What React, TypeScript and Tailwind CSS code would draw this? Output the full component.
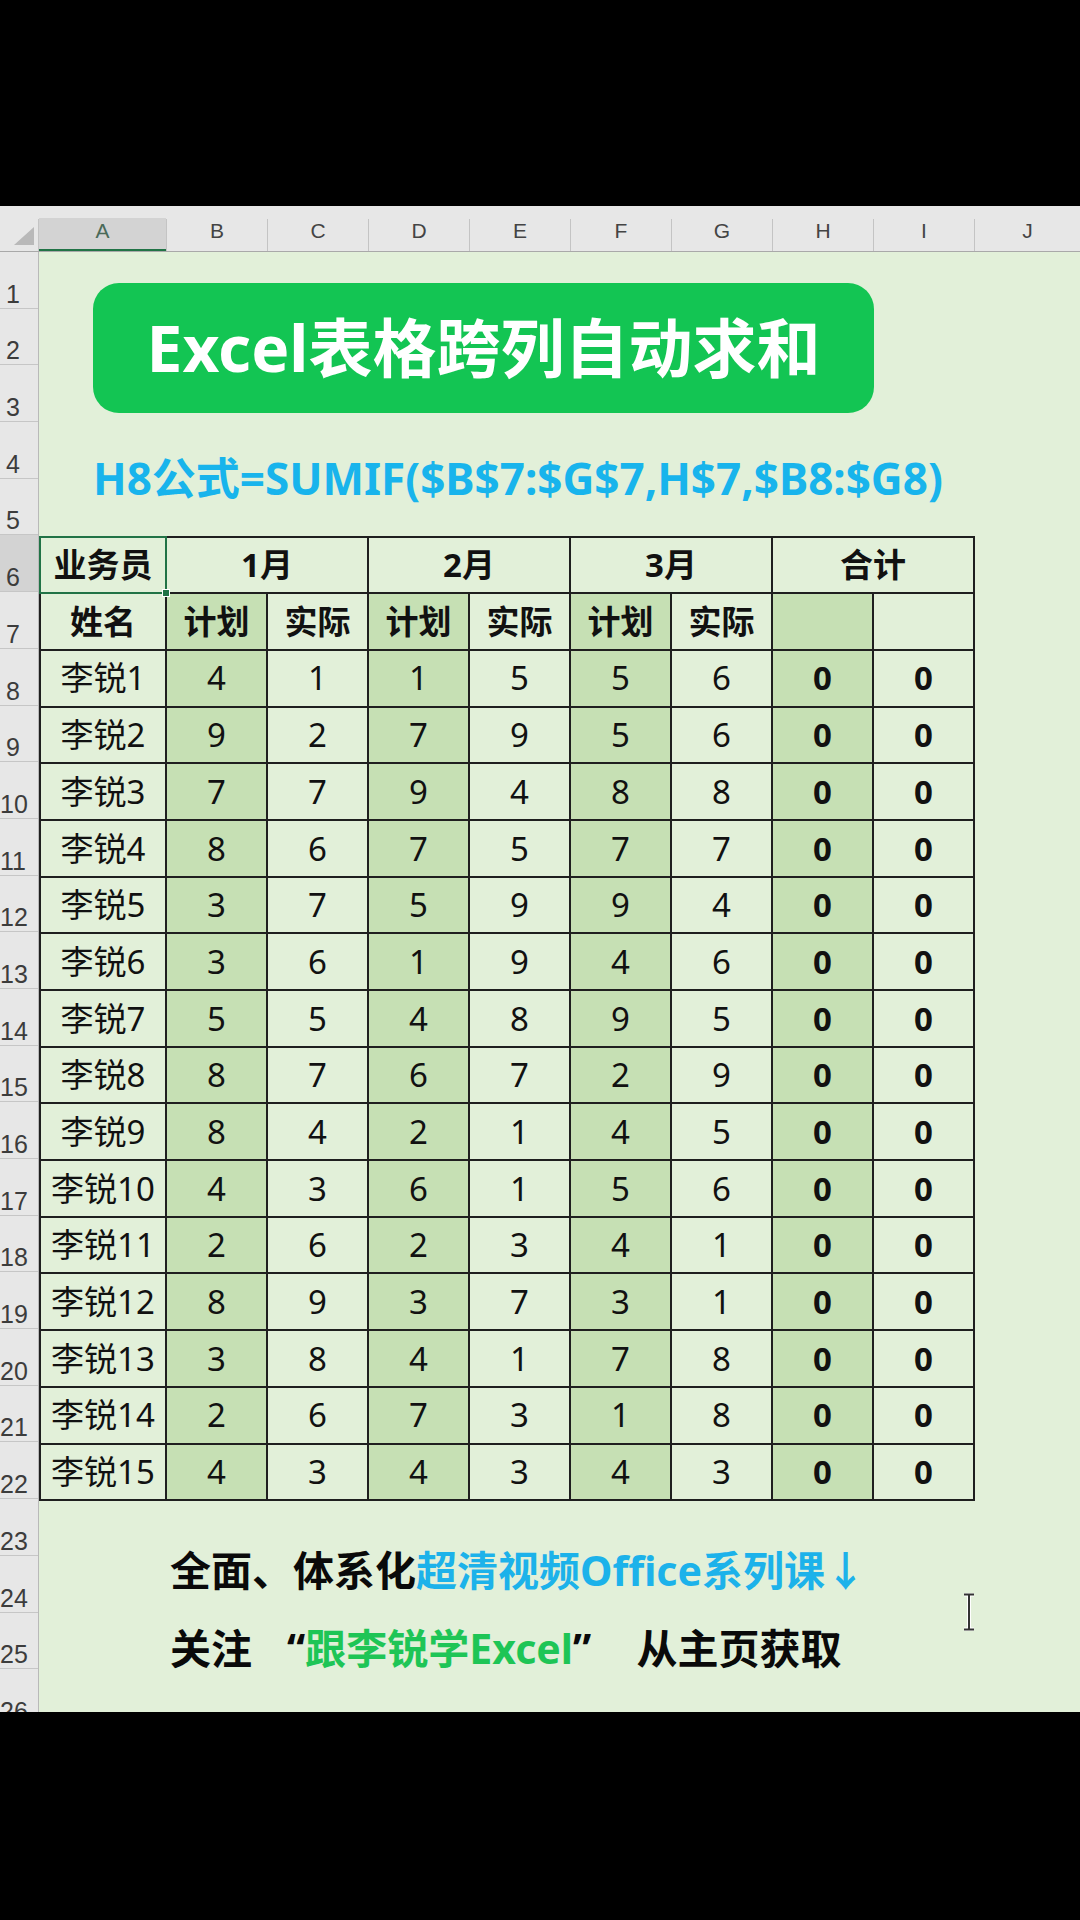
import React from 'react'

const data = [
  [4, 1, 1, 5, 5, 6],
  [9, 2, 7, 9, 5, 6],
  [7, 7, 9, 4, 8, 8],
  [8, 6, 7, 5, 7, 7],
  [3, 7, 5, 9, 9, 4],
  [3, 6, 1, 9, 4, 6],
  [5, 5, 4, 8, 9, 5],
  [8, 7, 6, 7, 2, 9],
  [8, 4, 2, 1, 4, 5],
  [4, 3, 6, 1, 5, 6],
  [2, 6, 2, 3, 4, 1],
  [8, 9, 3, 7, 3, 1],
  [3, 8, 4, 1, 7, 8],
  [2, 6, 7, 3, 1, 8],
  [4, 3, 4, 3, 4, 3],
]

const letters = ['B', 'C', 'D', 'E', 'F', 'G', 'H', 'I']

// cell styles
const cell = 'flex items-center justify-center border-r-2 border-b-2 border-[#1f1f1f] text-[#111]'
const light = 'bg-[#e2f0d9]'
const dark = 'bg-[#c6e0b4]'

const App: React.FC = () => {
  return (
    <div className="w-[1080px] h-[1920px] bg-black flex flex-col overflow-hidden font-['Noto_Sans','Noto_Sans_CJK_SC',sans-serif]">
      <div className="h-[206px] shrink-0" />

      <div className="h-[1506px] shrink-0 flex flex-col bg-[#e2f0d9]">
        {/* Column headers */}
        <div className="h-[46px] shrink-0 flex bg-[#e7e7e7] border-b border-[#a9a9a9] font-['Liberation_Sans',sans-serif] text-[21px] text-[#444]">
          <div className="w-[39px] shrink-0 flex items-end">
            <div className="flex-1 h-full flex items-end justify-end pb-[6px] pr-[4px]">
              <svg width="20" height="18" viewBox="0 0 20 18">
                <polygon points="0,18 20,0 20,18" fill="#b9b9b9" />
              </svg>
            </div>
            <div className="w-px h-[32px] bg-[#c4c4c4]" />
          </div>
          <div className="w-[128px] shrink-0 flex items-end">
            <div className="flex-1 h-[33px] bg-[#d3d3d3] border-b-2 border-[#217346] flex items-end justify-center pb-[3px] text-[#4a6a58]">
              A
            </div>
            <div className="w-px h-[32px] bg-[#c4c4c4]" />
          </div>
          {letters.map((l) => (
            <div key={l} className="w-[101px] shrink-0 flex items-end">
              <div className="flex-1 flex items-end justify-center pb-[5px]">{l}</div>
              <div className="w-px h-[32px] bg-[#c4c4c4]" />
            </div>
          ))}
          <div className="flex-1 flex items-end justify-center pb-[5px]">J</div>
        </div>

        <div className="flex-1 flex overflow-hidden">
          {/* Row headers */}
          <div className="w-[39px] shrink-0 flex flex-col bg-[#e7e7e7] border-r border-[#b9b9b9] overflow-hidden font-['Liberation_Sans',sans-serif] text-[25px] leading-[26px] text-[#3c3c3c]">
            {Array.from({ length: 26 }, (_, i) => (
              <div
                key={i}
                className={`h-[56.7px] shrink-0 flex items-end border-b border-[#c6c6c6] ${i === 5 ? 'bg-[#d3d3d3]' : ''}`}
              >
                <div className="w-[26px] text-center pb-[1px]">{i + 1}</div>
              </div>
            ))}
          </div>

          {/* Sheet content */}
          <div className="flex-1 flex flex-col relative">
            <div className="h-[170px] shrink-0 pt-[31px] pl-[54px]">
              <div className="w-[781px] h-[130px] rounded-[26px] bg-[#13c553] flex items-center justify-center text-white text-[64px] font-bold">
                Excel表格跨列自动求和
              </div>
            </div>

            <div className="h-[113.5px] shrink-0 pt-[28px] pl-[54px]">
              <div className="text-[44px] leading-[56px] font-bold text-[#18b4ec] whitespace-nowrap">
                H8公式=SUMIF($B$7:$G$7,H$7,$B8:$G8)
              </div>
            </div>

            {/* Table */}
            <div className="grid grid-cols-[126px_repeat(8,101px)] auto-rows-[56.7px] w-[936px] border-t-2 border-l-2 border-[#1f1f1f] text-[33px]">
              <div className={`${cell} ${light} relative font-bold`}>
                业务员
                <div className="absolute -left-[2px] -top-[2px] -right-[2px] -bottom-[2px] border-2 border-[#217346]" />
                <div className="absolute -right-[5px] -bottom-[5px] w-[8px] h-[8px] bg-[#217346] border border-white" />
              </div>
              <div className={`${cell} ${light} col-span-2 font-bold`}>1月</div>
              <div className={`${cell} ${light} col-span-2 font-bold`}>2月</div>
              <div className={`${cell} ${light} col-span-2 font-bold`}>3月</div>
              <div className={`${cell} ${light} col-span-2 font-bold`}>合计</div>

              <div className={`${cell} ${light} font-bold`}>姓名</div>
              <div className={`${cell} ${dark} font-bold`}>计划</div>
              <div className={`${cell} ${light} font-bold`}>实际</div>
              <div className={`${cell} ${dark} font-bold`}>计划</div>
              <div className={`${cell} ${light} font-bold`}>实际</div>
              <div className={`${cell} ${dark} font-bold`}>计划</div>
              <div className={`${cell} ${light} font-bold`}>实际</div>
              <div className={`${cell} ${dark}`} />
              <div className={`${cell} ${light}`} />

              {data.map((r, i) => (
                <React.Fragment key={i}>
                  <div className={`${cell} ${light}`}>李锐{i + 1}</div>
                  {r.map((v, j) => (
                    <div key={j} className={`${cell} ${j % 2 === 0 ? dark : light}`}>
                      {v}
                    </div>
                  ))}
                  <div className={`${cell} ${dark} font-bold`}>0</div>
                  <div className={`${cell} ${light} font-bold`}>0</div>
                </React.Fragment>
              ))}
            </div>

            {/* Footer */}
            <div className="mt-[30px] pl-[131px] text-[41px] leading-[78px] font-bold text-[#0a0a0a] whitespace-nowrap">
              <div>
                全面、体系化<span className="text-[#1cb2ea]">超清视频Office系列课↓</span>
              </div>
              <div>
                关注<span className="inline-block w-[1.3em] text-right">“</span>
                <span className="text-[#1ec556]">跟李锐学Excel</span>
                <span className="inline-block w-[1.55em] text-left">”</span>从主页获取
              </div>
            </div>

            {/* text cursor */}
            <div className="absolute left-[923px] top-[1341px]">
              <svg width="14" height="38" viewBox="0 0 14 38">
                <path d="M2 1.5h10M7 1.5v35M2 36.5h10" stroke="#fff" strokeWidth="4" fill="none" />
                <path d="M2 1.5h10M7 1.5v35M2 36.5h10" stroke="#333" strokeWidth="2" fill="none" />
              </svg>
            </div>
          </div>
        </div>
      </div>

      <div className="flex-1" />
    </div>
  )
}

export default App
